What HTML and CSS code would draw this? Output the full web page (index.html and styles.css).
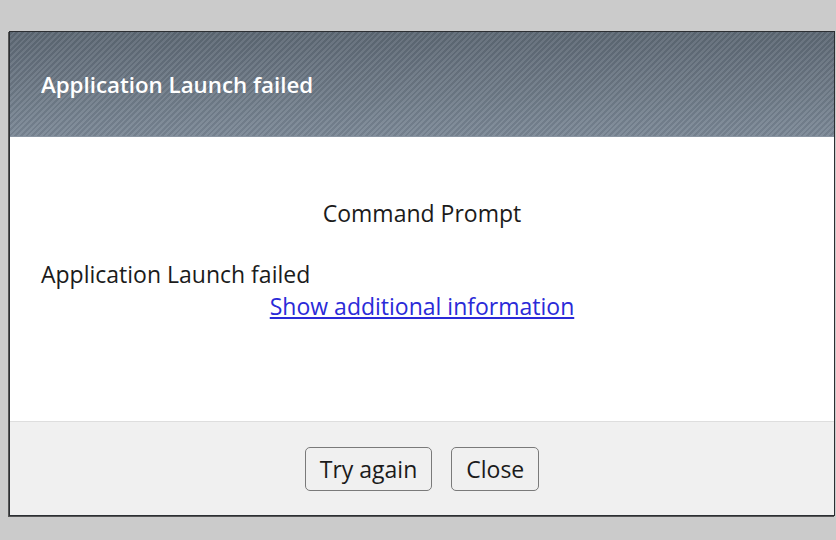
FILE: index.html
```html
<!DOCTYPE html>
<html lang="en">
<head>
<meta charset="utf-8">
<title>Application Launch failed</title>
<link rel="stylesheet" href="styles.css">
</head>
<body>
<div class="dialog">
  <div class="dialog-header">
    <span class="dialog-title">Application Launch failed</span>
  </div>
  <div class="dialog-body">
    <div class="app-name">Command Prompt</div>
    <div class="message">Application Launch failed</div>
    <div class="more"><a href="#" class="more-link">Show additional information</a></div>
  </div>
  <div class="dialog-footer">
    <button class="btn">Try again</button>
    <button class="btn">Close</button>
  </div>
</div>
</body>
</html>
```

FILE: styles.css
```css
html, body {
  margin: 0;
  padding: 0;
  background: #cbcbcb;
  height: 100%;
}
body {
  font-family: "Open Sans", "Noto Sans", sans-serif;
  color: #1b1b1b;
  overflow: hidden;
}
.dialog {
  margin: 31px 0 0 9px;
  width: 824px;
  border: 1px solid #2c2f33;
  box-shadow: -1px 1px 0 #555;
  background: #fff;
}
.dialog-header {
  height: 104px;
  display: flex;
  align-items: center;
  padding: 0 31px;
  background:
    repeating-linear-gradient(-45deg, rgba(255,255,255,0.07) 0 2px, rgba(0,0,0,0.05) 2px 4px),
    linear-gradient(to bottom, #5d6874, #7a8795);
  border-bottom: 1px solid #8a95a2;
}
.dialog-title {
  color: #fff;
  font-size: 22.3px;
  font-weight: 600;
}
.dialog-body {
  height: 284px;
  box-sizing: border-box;
  padding: 60px 31px 0;
  font-size: 23px;
}
.app-name {
  text-align: center;
  line-height: 32px;
}
.message {
  margin-top: 29px;
  line-height: 32px;
}
.more {
  text-align: center;
  line-height: 32px;
}
.more-link {
  color: #2a2ad8;
  text-decoration: underline;
}
.dialog-footer {
  height: 93px;
  background: #f0f0f0;
  border-top: 1px solid #dedede;
  display: flex;
  justify-content: center;
  align-items: center;
  gap: 19px;
}
.btn {
  font-family: inherit;
  font-size: 23px;
  color: #1b1b1b;
  background: #f0f0f0;
  border: 1px solid #7a7a7a;
  border-radius: 5px;
  height: 44px;
  padding: 0 14px;
  margin: 0;
}
```
